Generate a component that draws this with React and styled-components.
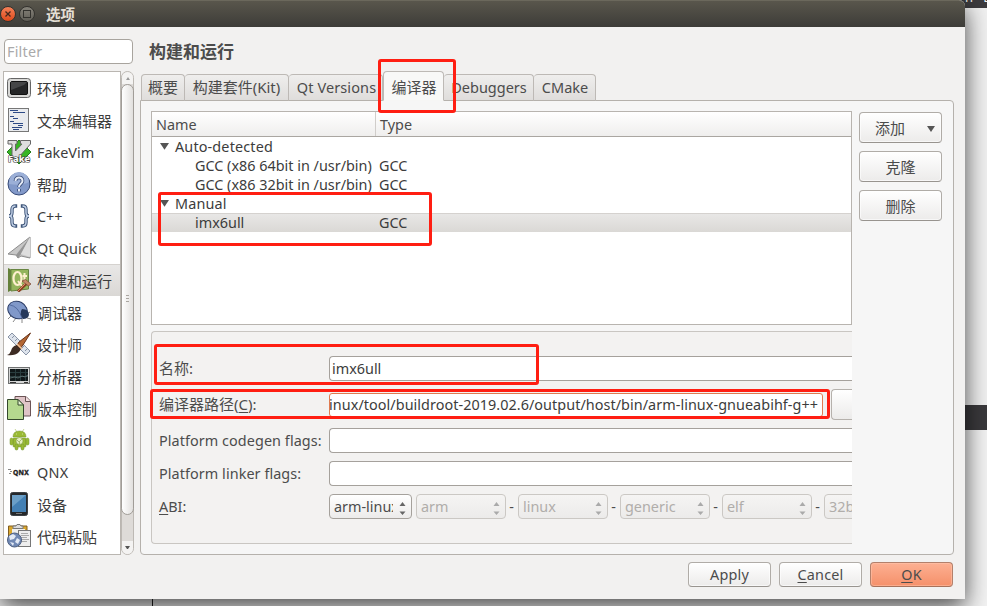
import React from "react";
import styled, { createGlobalStyle } from "styled-components";

const GlobalStyle = createGlobalStyle`
  * {
    box-sizing: border-box;
  }
  body {
    margin: 0;
    overflow: hidden;
    color: #4c4c4c;
    font-family: "Noto Sans", "Noto Sans CJK SC", sans-serif;
    font-size: 14.4px;
    line-height: 19px;
  }
`;

const Desktop = styled.div`
  position: relative;
  width: 987px;
  height: 606px;
  overflow: hidden;
  background: linear-gradient(#3c3b3e 0 8px, #f1f1f1 8px 405px, #3a393c 405px 430px, #f3f3f3 430px);
`;

const DesktopText = styled.div`
  position: absolute;
  top: -12px;
  left: 965px;
  color: #f2f2f2;
  font-size: 13px;
  white-space: nowrap;
`;

const DesktopLine = styled.div`
  position: absolute;
  left: 152px;
  bottom: 0;
  width: 1px;
  height: 7px;
  background: #111;
`;

const Dialog = styled.div`
  position: relative;
  display: flex;
  flex-direction: column;
  width: 965px;
  height: 599px;
  background: #f2f1f0;
  border-radius: 0 6px 0 0;
  box-shadow: 0 8px 24px 0 rgba(0, 0, 0, 0.7);
`;

const TitleBar = styled.div`
  display: flex;
  align-items: center;
  height: 27px;
  flex: none;
  border-top: 1px solid #6b685c;
  border-radius: 0 6px 0 0;
  background: linear-gradient(#59564c, #3d3c38);
  color: #e4dfd5;
  font-size: 14.5px;
  font-weight: 700;
`;

const WindowButton = styled.div`
  display: flex;
  width: 16px;
  height: 16px;
  margin-right: 3px;
  border: 1px solid #33322e;
  border-radius: 50%;
  background: ${(props) => (props.$close ? "linear-gradient(#f58158, #dd4a1c)" : "linear-gradient(#858279, #605e57)")};
`;

const TitleText = styled.span`
  margin-left: 8px;
`;

const Body = styled.div`
  display: flex;
  flex: 1;
  padding: 12px 11px 11px 3px;
`;

const Sidebar = styled.div`
  width: 131px;
  flex: none;
`;

const Filter = styled.div`
  height: 25px;
  margin: 0 0 7px 1px;
  padding: 2px;
  width: 129px;
  border: 1px solid #a8a49e;
  border-radius: 4px;
  background: #fff;
  color: #aaa;
  letter-spacing: 0.2px;
`;

const ListRow = styled.div`
  display: flex;
  height: 484px;
`;

const List = styled.div`
  width: 118px;
  border: 1px solid #bab6b1;
  background: #fff;
`;

const Item = styled.div`
  display: flex;
  align-items: center;
  gap: 6px;
  height: 32px;
  padding: ${(props) => (props.$latin ? 0 : 2)}px 0 0 3px;
  white-space: nowrap;
  letter-spacing: ${(props) => props.$spacing || 0}px;
  font-size: ${(props) => (props.$latin ? "14.4px" : "15px")};
  color: #3c3c3c;
  background: ${(props) => (props.$selected ? "linear-gradient(#e9e8e7, #dad8d5)" : "none")};
  box-shadow: ${(props) => (props.$selected ? "inset 0 1px #d5d2cf" : "none")};

  svg {
    flex: none;
    margin-top: ${(props) => (props.$latin ? -1 : -3)}px;
  }
`;

const ScrollBar = styled.div`
  display: flex;
  flex-direction: column;
  align-items: center;
  width: 13px;
  border: 1px solid #bdb9b4;
  border-radius: 7px;
  background: #dedbd8;
`;

const ScrollEnd = styled.div`
  display: flex;
  align-items: center;
  justify-content: center;
  width: 11px;
  height: ${(props) => props.$height}px;
  border-radius: ${(props) => (props.$up ? "6px 6px 0 0" : "0 0 6px 6px")};
  background: #f4f3f2;
`;

const Thumb = styled.div`
  display: flex;
  flex-direction: column;
  align-items: center;
  justify-content: center;
  gap: 2px;
  width: 13px;
  height: 431px;
  padding-bottom: 3px;
  border: 1px solid #a19d98;
  border-radius: 7px;
  background: linear-gradient(90deg, #fff, #e2e0de);
`;

const Grip = styled.div`
  width: 3px;
  height: 1px;
  background: #aaa6a1;
`;

const Groove = styled.div`
  flex: 1;
`;

const Content = styled.div`
  display: flex;
  flex-direction: column;
  flex: 1;
  margin-left: 6px;
`;

const Heading = styled.div`
  height: 32px;
  padding: 3px 0 0 9px;
  font-size: 17px;
  font-weight: 700;
`;

const Tabs = styled.div`
  display: flex;
  align-items: flex-end;
  height: 30px;
  margin-bottom: -1px;
  padding-left: 1px;
  position: relative;
  z-index: 1;
`;

const Tab = styled.div`
  display: flex;
  align-items: center;
  justify-content: center;
  width: ${(props) => props.$width}px;
  height: ${(props) => (props.$active ? 30 : 27)}px;
  padding-top: ${(props) => (props.$active ? 2 : 0)}px;
  padding-left: ${(props) => props.$shift || 0}px;
  border: 1px solid #bdb9b5;
  border-left-width: ${(props) => (props.$active ? 1 : props.$first ? 1 : 0)}px;
  border-bottom-color: ${(props) => (props.$active ? "#f6f6f5" : "#b5b1ac")};
  border-radius: 4px 4px 0 0;
  background: ${(props) => (props.$active ? "#f8f8f7" : "linear-gradient(#efeeed, #dfdddb)")};
  font-size: ${(props) => (props.$cjk ? "15px" : "14.5px")};
  letter-spacing: ${(props) => props.$spacing || 0}px;
  white-space: nowrap;
`;

const Pane = styled.div`
  display: flex;
  gap: 7px;
  height: 455px;
  padding: 10px 11px 10px 10px;
  border: 1px solid #b5b1ac;
  border-radius: 0 4px 4px 4px;
  background: #f6f6f6;
`;

const Main = styled.div`
  width: 701px;
  flex: none;
`;

const Tree = styled.div`
  height: 214px;
  border: 1px solid #b8b4af;
  background: #fff;
`;

const TreeHeader = styled.div`
  display: flex;
  height: 25px;
  border-bottom: 1px solid #aaa6a1;
  background: linear-gradient(#fff, #efeeed);
`;

const HeaderCell = styled.div`
  width: ${(props) => props.$width};
  padding: 3px 4px;
  border-right: ${(props) => (props.$divider ? "1px solid #d0cdca" : "none")};
`;

const TreeRow = styled.div`
  display: flex;
  height: 19px;
  color: #3c3c3c;
  background: ${(props) => (props.$selected ? "linear-gradient(#e9e8e7, #dad8d5)" : "none")};
  box-shadow: ${(props) => (props.$selected ? "inset 0 1px #d5d2cf" : "none")};
`;

const NameCell = styled.div`
  display: flex;
  width: 227px;
  padding-left: ${(props) => (props.$group ? 8 : 43)}px;
  letter-spacing: ${(props) => (props.$group ? 0.15 : 0)}px;
  white-space: nowrap;

  svg {
    margin: 6px 6px 0 0;
  }
`;

const Form = styled.div`
  display: flex;
  flex-direction: column;
  gap: 8px;
  height: 213px;
  margin-top: 6px;
  padding: 24px 0 0 7px;
  overflow: hidden;
  border: 1px solid #c9c6c2;
  border-right: 0;
  border-radius: 4px 0 0 4px;
  background: #f3f2f1;
`;

const Field = styled.div`
  display: flex;
  align-items: center;
  height: ${(props) => props.$height || 25}px;
`;

const Label = styled.div`
  width: 170px;
  flex: none;
  white-space: nowrap;
  font-size: ${(props) => (props.$cjk ? "15px" : "14.4px")};
  letter-spacing: ${(props) => props.$spacing || 0}px;
`;

const Input = styled.div`
  display: flex;
  align-items: center;
  flex: 1;
  height: 25px;
  padding-left: 2px;
  border: 1px solid #a5a19c;
  border-right: 0;
  border-radius: 4px 0 0 4px;
  background: #fff;
  color: #3c3c3c;
`;

const PathInput = styled.div`
  display: flex;
  align-items: center;
  justify-content: flex-end;
  width: 494px;
  height: 24px;
  flex: none;
  padding-right: 4px;
  overflow: hidden;
  border: 1px solid #e07b51;
  border-radius: 3px;
  background: #fff;
  color: #3c3c3c;
  white-space: nowrap;
  letter-spacing: 0.05px;
`;

const BrowseButton = styled.div`
  flex: 1;
  height: 31px;
  margin-left: 8px;
  border: 1px solid #b5b1ac;
  border-right: 0;
  border-radius: 4px 0 0 4px;
  background: linear-gradient(#fff, #ecebea);
`;

const Combo = styled.div`
  display: flex;
  align-items: center;
  justify-content: space-between;
  width: ${(props) => props.$width || 90}px;
  height: 25px;
  flex: none;
  padding: 0 5px 0 4px;
  border: 1px solid ${(props) => (props.$enabled ? "#a5a19c" : "#cbc8c4")};
  border-radius: 4px;
  background: ${(props) => (props.$enabled ? "linear-gradient(#fff, #ecebea)" : "linear-gradient(#f5f4f3, #ecebea)")};
  color: ${(props) => (props.$enabled ? "#4c4c4c" : "#b0adaa")};

  & + & {
    margin-left: 4px;
  }
  svg {
    flex: none;
    margin-top: 4px;
  }
`;

const ComboText = styled.span`
  width: ${(props) => props.$width || 66}px;
  overflow: hidden;
  white-space: nowrap;
`;

const Dash = styled.span`
  width: 12px;
  flex: none;
  padding-right: 1px;
  text-align: center;
`;

const Actions = styled.div`
  display: flex;
  flex-direction: column;
  gap: 8px;
  padding-top: 1px;
`;

const Button = styled.div`
  display: flex;
  align-items: center;
  justify-content: center;
  width: 83px;
  height: ${(props) => props.$height || 25}px;
  padding-top: ${(props) => (props.$height ? 2 : 0)}px;
  border: 1px solid ${(props) => (props.$primary ? "#b3806b" : "#b0aca7")};
  border-bottom-color: ${(props) => (props.$primary ? "#a8715a" : "#98948f")};
  border-radius: 4px;
  background: ${(props) => (props.$primary ? "linear-gradient(#fdb092, #f5906a)" : "linear-gradient(#fff, #ecebea)")};
  box-shadow: inset 0 0 0 1px ${(props) => (props.$primary ? "rgba(255, 200, 175, 0.5)" : "rgba(255, 255, 255, 0.6)")};
  font-size: ${(props) => (props.$height ? "15px" : "14.4px")};
  letter-spacing: ${(props) => (props.$height ? 0 : 0.2)}px;

  svg {
    margin: 0 -9px 0 22px;
  }
`;

const Footer = styled.div`
  display: flex;
  justify-content: flex-end;
  gap: 8px;
  margin: 7px 1px 0 0;
`;

const Key = styled.span`
  text-decoration: underline;
  text-underline-offset: 2px;
  text-decoration-thickness: 1px;
`;

const Marker = styled.div`
  position: absolute;
  left: ${(props) => props.$x}px;
  top: ${(props) => props.$y}px;
  width: ${(props) => props.$w}px;
  height: ${(props) => props.$h}px;
  z-index: 2;
  border: 3px solid #ff1e12;
  border-radius: 3px;
`;

const Arrow = ({ up, size = 8, color = "#555" }) => (
  <svg width={size} height={size * 0.75} viewBox="0 0 8 6">
    <path d={up ? "M4 0L8 6H0Z" : "M0 0H8L4 6Z"} fill={color} />
  </svg>
);

const Spin = ({ color }) => (
  <svg width="7" height="14" viewBox="0 0 7 14">
    <path d="M.5 4L3.5 0L6.5 4ZM.5 9.5H6.5L3.5 13Z" fill={color} />
  </svg>
);

const bracesPath =
  "M8.5 2Q5 2 5 5.5V8.5Q5 12 2 12Q5 12 5 15.5V18.5Q5 22 8.5 22M15.5 2Q19 2 19 5.5V8.5Q19 12 22 12Q19 12 19 15.5V18.5Q19 22 15.5 22";

const icons = {
  monitor: (
    <>
      <rect x=".5" y="2.5" width="23" height="19" rx="3" fill="#d8d8d6" stroke="#666" />
      <rect x="3.5" y="5.5" width="17" height="13" rx="1.5" fill="#252627" stroke="#111" />
      <path d="M4 6H20L17 9L4 14Z" fill="#454647" />
    </>
  ),
  text: (
    <>
      <rect x="1.5" y=".5" width="20" height="23" fill="#e9ebee" stroke="#777" />
      <path d="M3 2.5H11M6 4.5H18M3 8.5H7M6 10.5H11M3 13.5H7M6 15.5H16M11 17.5H16M5 19.5H15M6 21.5H12" stroke="#2d4a86" />
    </>
  ),
  vim: (
    <>
      <path d="M12 0L24 12L12 24L0 12Z" fill="#37b523" stroke="#237d1b" />
      <path d="M1 .5H10V4H8.5V11L15 4H13.5V.5H23.5V4L11 18H5V4H1Z" fill="#dedede" stroke="#666" />
      <text x="1" y="22" fontSize="9" fontWeight="700" fill="#fff" stroke="#444" strokeWidth="1.2" paintOrder="stroke" textLength="22" lengthAdjust="spacingAndGlyphs">Fake</text>
    </>
  ),
  help: (
    <>
      <circle cx="12" cy="12" r="11" fill="#8299c9" stroke="#384b77" />
      <path d="M2 10A10 10 0 0 1 22 10Q15 14 2 12Z" fill="#9bafd7" />
      <path d="M8.5 9Q8.5 5.5 12 5.5T15.5 9C15.5 12 12 11.5 12 15M12 17V19.5" fill="none" stroke="#384b77" strokeWidth="3.6" />
      <path d="M8.5 9Q8.5 5.5 12 5.5T15.5 9C15.5 12 12 11.5 12 15M12 17V19.5" fill="none" stroke="#e6ecf7" strokeWidth="2" />
    </>
  ),
  braces: (
    <>
      <path d={bracesPath} fill="none" stroke="#3f5679" strokeWidth="3.4" strokeLinecap="square" />
      <path d={bracesPath} fill="none" stroke="#c4d2e8" strokeWidth="1.4" />
    </>
  ),
  plane: (
    <>
      <path d="M23 1L1 18L9 19L11 22L14 20L23 22Z" fill="#c7c7c7" stroke="#8c8c8c" />
      <path d="M23 1L9 19L11 22L14 18Z" fill="#959595" />
      <path d="M23 1L14 18L23 21Z" fill="#dedede" />
    </>
  ),
  build: (
    <>
      <path d="M1 0L5 2V22L1 24Z" fill="#64803a" />
      <path d="M4 1.5H21.5V21L4 23Z" fill="#94b45c" stroke="#688542" />
      <ellipse cx="10.5" cy="10.5" rx="4" ry="6.5" fill="none" stroke="#fff0cf" strokeWidth="2.2" />
      <path d="M11 13L15 18M17.5 5V14Q17.5 16 19.5 16M15.5 8H20" fill="none" stroke="#fff0cf" strokeWidth="2" />
      <path d="M11 23.5L20 15" stroke="#8a3f24" strokeWidth="3" />
      <path d="M11 23L19 15" stroke="#df8c64" />
      <path d="M15 13L18.5 11.5L24 16L21.5 18Z" fill="#c48865" stroke="#754332" strokeWidth=".7" />
    </>
  ),
  bug: (
    <>
      <path d="M4 16L1 19M9 18L6 22M15 19L15 23M20 18L24 19M20 14L23 12" stroke="#888" fill="none" />
      <ellipse cx="10.5" cy="10" rx="10" ry="8.5" transform="rotate(28 10.5 10)" fill="#8098c9" stroke="#2b3c65" />
      <path d="M3 5Q11 6 15 18" fill="none" stroke="#536ba0" />
      <path d="M15 9Q22 9 22 15Q21 19 16 19Q12 13 15 9Z" fill="#26395b" />
    </>
  ),
  design: (
    <>
      <path d="M1 5L5 1L23 19L19 23Z" fill="#dde3ec" stroke="#8994a6" />
      <path d="M5 6L7 4M8 9L10 7M15 16L17 14M18 19L20 17" stroke="#8793a5" />
      <path d="M23.5 1L12 10L9 15L12 18L16 13Z" fill="#b36633" stroke="#6a3419" />
      <path d="M10 13Q5 14 4 19Q3 22 0 23Q8 24 12 20L14 17Z" fill="#3d2b23" />
      <path d="M10 12L15 17" stroke="#f1c39a" strokeWidth="1.5" />
    </>
  ),
  analyze: (
    <>
      <rect x="1.5" y="3.5" width="21" height="16" fill="#d4d5d5" stroke="#6f7171" />
      <rect x="3" y="5" width="18" height="12" fill="#101719" />
      <path d="M3 8.5H21M3 12.5H21M8.5 5V17M13.5 5V17M18.5 5V17" stroke="#293c3e" />
      <path d="M3 14L8 13L11 14L15 12L18 13L21 11" fill="none" stroke="#71888a" strokeWidth=".7" />
      <path d="M3 18.5H9M17 18.5H21" stroke="#333" />
    </>
  ),
  files: (
    <>
      <path d="M8 .5H19L23.5 5V20H8Z" fill="#dfc4c7" stroke="#6b5456" />
      <path d="M18.5 .5V5.5H23.5" fill="#f3dfe1" stroke="#6b5456" />
      <path d="M.5 3.5H11L16.5 9V23.5H.5Z" fill="#b5d98f" stroke="#34482c" />
      <path d="M11 3.5V9H16.5Z" fill="#e5f4d2" stroke="#34482c" />
    </>
  ),
  android: (
    <g fill="#9aba34" stroke="#71902a" strokeWidth=".5">
      <path d="M8 1L10 4M17 1L15 4" stroke="#91b034" />
      <path d="M6 9Q6 3 12.5 3T19 9Z" />
      <rect x="6" y="10" width="13" height="9" rx="1" />
      <rect x="3" y="10" width="3" height="7" rx="1.5" />
      <rect x="19" y="10" width="3" height="7" rx="1.5" />
      <rect x="8" y="16" width="3" height="6" rx="1.5" />
      <rect x="14" y="16" width="3" height="6" rx="1.5" />
      <circle cx="12.5" cy="13" r="3.5" fill="#e5efc0" />
      <path d="M9 6H10M15 6H16" stroke="#fff" />
      <path d="M10 12L12 14L15 11M12.5 14V16" stroke="#6c852c" fill="none" />
    </g>
  ),
  qnx: (
    <>
      <path d="M1 9.5H4M3 11.5H5M2 13.5H4" stroke="#888" />
      <text x="6" y="14.5" fontSize="7" fontWeight="700" fill="#222" stroke="#222" strokeWidth=".4" textLength="16" lengthAdjust="spacingAndGlyphs">QNX</text>
    </>
  ),
  device: (
    <>
      <rect x="3.5" y=".5" width="17" height="23" rx="2" fill="#25282b" stroke="#3c4044" />
      <rect x="5" y="3" width="14" height="17" fill="#4380b4" />
      <path d="M5 3H19L5 15Z" fill="#6b9fc7" />
      <path d="M9 21.5H15" stroke="#777" />
    </>
  ),
  paste: (
    <>
      <path d="M1.5 2H20V19H1.5Z" fill="#dba82d" stroke="#815d20" />
      <path d="M5 5H18V18H5Z" fill="#efefed" />
      <path d="M6 4.5V2H9L10 .5H13L14 2H16V4.5Z" fill="#ddd" stroke="#777" />
      <rect x="11.5" y="6.5" width="12" height="16" fill="#eee" stroke="#777" />
      <path d="M14 9.5H21M14 11.5H22M14 13.5H20M14 15.5H22M14 17.5H20" stroke="#aaa" />
      <circle cx="7.5" cy="16" r="7" fill="#7189b4" stroke="#4d5f80" />
      <path d="M2 12L6 10L9 12L7 15L3 16ZM10 14L13 16L11 20L8 18ZM3 18L7 19L6 22Z" fill="#e3eaf5" />
    </>
  ),
};

const pages = [
  { icon: "monitor", title: "环境" },
  { icon: "text", title: "文本编辑器" },
  { icon: "vim", title: "FakeVim", latin: true },
  { icon: "help", title: "帮助" },
  { icon: "braces", title: "C++", latin: true },
  { icon: "plane", title: "Qt Quick", latin: true, spacing: 0.15 },
  { icon: "build", title: "构建和运行", selected: true },
  { icon: "bug", title: "调试器" },
  { icon: "design", title: "设计师" },
  { icon: "analyze", title: "分析器" },
  { icon: "files", title: "版本控制" },
  { icon: "android", title: "Android", latin: true, spacing: 0.15 },
  { icon: "qnx", title: "QNX", latin: true, spacing: 0.3 },
  { icon: "device", title: "设备" },
  { icon: "paste", title: "代码粘贴" },
];

const tabs = [
  { title: "概要", width: 44, first: true, cjk: true },
  { title: "构建套件(Kit)", width: 104, cjk: true },
  { title: "Qt Versions", width: 94, spacing: 0.1, shift: 2 },
  { title: "编译器", width: 61, active: true, cjk: true, shift: 1 },
  { title: "Debuggers", width: 90, shift: 1 },
  { title: "CMake", width: 62, shift: 1 },
];

const compilers = [
  { name: "Auto-detected", group: true },
  { name: "GCC (x86 64bit in /usr/bin)", type: "GCC" },
  { name: "GCC (x86 32bit in /usr/bin)", type: "GCC" },
  { name: "Manual", group: true },
  { name: "imx6ull", type: "GCC", selected: true },
];

const App = () => {
  return (
    <>
      <GlobalStyle />
      <Desktop>
        <DesktopText>n &nbsp; E</DesktopText>
        <Dialog>
          <TitleBar>
            <WindowButton $close>
              <svg width="14" height="14">
                <path d="M4.5 4.5L9.5 9.5M9.5 4.5L4.5 9.5" stroke="#43281d" strokeWidth="1.3" />
              </svg>
            </WindowButton>
            <WindowButton>
              <svg width="14" height="14">
                <rect x="3.5" y="3.5" width="7" height="7" fill="none" stroke="#33322e" />
              </svg>
            </WindowButton>
            <TitleText>选项</TitleText>
          </TitleBar>
          <Body>
            <Sidebar>
              <Filter>Filter</Filter>
              <ListRow>
                <List>
                  {pages.map((page) => (
                    <Item key={page.title} $selected={page.selected} $latin={page.latin} $spacing={page.spacing}>
                      <svg width="24" height="24" viewBox="0 0 24 24">
                        {icons[page.icon]}
                      </svg>
                      {page.title}
                    </Item>
                  ))}
                </List>
                <ScrollBar>
                  <ScrollEnd $up $height={12}>
                    <Arrow up size={4} color="#999" />
                  </ScrollEnd>
                  <Thumb>
                    <Grip />
                    <Grip />
                    <Grip />
                  </Thumb>
                  <Groove />
                  <ScrollEnd $height={13}>
                    <Arrow size={5} />
                  </ScrollEnd>
                </ScrollBar>
              </ListRow>
            </Sidebar>
            <Content>
              <Heading>构建和运行</Heading>
              <Tabs>
                {tabs.map((tab) => (
                  <Tab
                    key={tab.title}
                    $width={tab.width}
                    $active={tab.active}
                    $first={tab.first}
                    $cjk={tab.cjk}
                    $shift={tab.shift}
                    $spacing={tab.spacing}
                  >
                    {tab.title}
                  </Tab>
                ))}
              </Tabs>
              <Pane>
                <Main>
                  <Tree>
                    <TreeHeader>
                      <HeaderCell $width="224px" $divider>Name</HeaderCell>
                      <HeaderCell $width="auto">Type</HeaderCell>
                    </TreeHeader>
                    {compilers.map((row) => (
                      <TreeRow key={row.name} $selected={row.selected}>
                        <NameCell $group={row.group}>
                          {row.group && <Arrow size={9} />}
                          {row.name}
                        </NameCell>
                        {row.type}
                      </TreeRow>
                    ))}
                  </Tree>
                  <Form>
                    <Field>
                      <Label $cjk>名称:</Label>
                      <Input>imx6ull</Input>
                    </Field>
                    <Field $height={31}>
                      <Label $cjk>编译器路径(<Key>C</Key>):</Label>
                      <PathInput>inux/tool/buildroot-2019.02.6/output/host/bin/arm-linux-gnueabihf-g++</PathInput>
                      <BrowseButton />
                    </Field>
                    <Field>
                      <Label $spacing={0.07}>Platform codegen flags:</Label>
                      <Input />
                    </Field>
                    <Field>
                      <Label $spacing={0.07}>Platform linker flags:</Label>
                      <Input />
                    </Field>
                    <Field>
                      <Label><Key>A</Key>BI:</Label>
                      <Combo $enabled $width={83}>
                        <ComboText $width={59}>arm-linux</ComboText>
                        <Spin color="#666" />
                      </Combo>
                      <Combo>
                        <ComboText>arm</ComboText>
                        <Spin color="#aaa" />
                      </Combo>
                      {["linux", "generic", "elf", "32bit"].map((value) => (
                        <React.Fragment key={value}>
                          <Dash>-</Dash>
                          <Combo>
                            <ComboText>{value}</ComboText>
                            <Spin color="#aaa" />
                          </Combo>
                        </React.Fragment>
                      ))}
                    </Field>
                  </Form>
                </Main>
                <Actions>
                  <Button $height={31}>
                    添加
                    <Arrow />
                  </Button>
                  <Button $height={31}>克隆</Button>
                  <Button $height={31}>删除</Button>
                </Actions>
              </Pane>
              <Footer>
                <Button>Apply</Button>
                <Button><span><Key>C</Key>ancel</span></Button>
                <Button $primary><span><Key>O</Key>K</span></Button>
              </Footer>
            </Content>
          </Body>
        </Dialog>
        <DesktopLine />
        <Marker $x={378} $y={59} $w={78} $h={54} />
        <Marker $x={158} $y={192} $w={274} $h={54} />
        <Marker $x={154} $y={344} $w={385} $h={41} />
        <Marker $x={150} $y={389} $w={680} $h={30} />
      </Desktop>
    </>
  );
};

export default App;
